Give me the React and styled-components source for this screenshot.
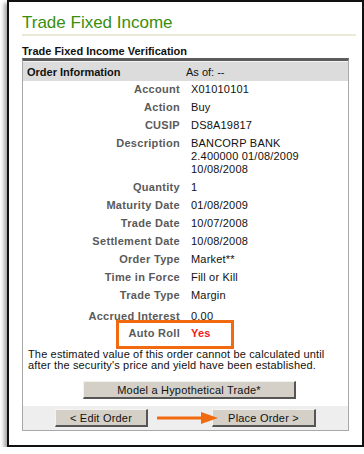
import React from "react";
import styled, { createGlobalStyle } from "styled-components";

const GlobalStyle = createGlobalStyle`
  html, body {
    margin: 0;
    padding: 0;
    background: #ffffff;
  }
  body {
    font-family: "Liberation Sans", Arial, sans-serif;
    font-size: 11px;
    color: #111;
  }
`;

const fields = [
  { label: "Account", value: ["X01010101"] },
  { label: "Action", value: ["Buy"] },
  { label: "CUSIP", value: ["DS8A19817"] },
  {
    label: "Description",
    value: ["BANCORP BANK", "2.400000 01/08/2009", "10/08/2008"],
  },
  { label: "Quantity", value: ["1"] },
  { label: "Maturity Date", value: ["01/08/2009"] },
  { label: "Trade Date", value: ["10/07/2008"] },
  { label: "Settlement Date", value: ["10/08/2008"] },
  { label: "Order Type", value: ["Market**"] },
  { label: "Time in Force", value: ["Fill or Kill"] },
  { label: "Trade Type", value: ["Margin"] },
  { label: "Accrued Interest", value: ["0.00"], spaced: true },
];

const ArrowIcon = () => (
  <svg width="62" height="14" viewBox="0 0 62 14">
    <line x1="1" y1="7" x2="48" y2="7" stroke="#f26a10" strokeWidth="3" strokeLinecap="round" />
    <path d="M44 1 L61 7 L44 13 Z" fill="#f26a10" />
  </svg>
);

export default function App() {
  return (
    <>
      <GlobalStyle />
      <Frame>
        <Title>Trade Fixed Income</Title>
        <Subtitle>Trade Fixed Income Verification</Subtitle>
        <Panel>
          <HeaderRow>
            <span className="heading">Order Information</span>
            <span>As of: --</span>
          </HeaderRow>
          <Fields>
            {fields.map((f) => (
              <FieldRow key={f.label} $spaced={f.spaced}>
                <Label>{f.label}</Label>
                <Value>
                  {f.value.map((line) => (
                    <div key={line}>{line}</div>
                  ))}
                </Value>
              </FieldRow>
            ))}
            <FieldRow>
              <Highlight />
              <Label>Auto Roll</Label>
              <Value $alert>Yes</Value>
            </FieldRow>
          </Fields>
          <Note>
            The estimated value of this order cannot be calculated until
            <br />
            after the security's price and yield have been established.
          </Note>
          <ModelRow>
            <Button $width={213}>Model a Hypothetical Trade*</Button>
          </ModelRow>
          <ActionBar>
            <Button $width={93}>&lt; Edit Order</Button>
            <Pointer>
              <ArrowIcon />
            </Pointer>
            <Button $width={104}>Place Order &gt;</Button>
          </ActionBar>
        </Panel>
      </Frame>
    </>
  );
}

const Frame = styled.div`
  box-sizing: border-box;
  margin-left: 7px;
  width: 357px;
  height: 447px;
  border: 2px solid #111;
  box-shadow: -3px 3px 4px rgba(0, 0, 0, 0.35);
  padding: 11px 6px 0 13px;
`;

const Title = styled.h1`
  margin: 0;
  font-family: "Liberation Sans", Arial, sans-serif;
  font-weight: normal;
  font-size: 17px;
  line-height: 19px;
  color: #3a8e0e;
  padding-bottom: 2px;
  border-bottom: 2px solid #ecead6;
`;

const Subtitle = styled.h2`
  margin: 9px 0 0;
  font-size: 11px;
  line-height: 13px;
  font-weight: bold;
  color: #111;
`;

const Panel = styled.div`
  box-sizing: border-box;
  width: 327px;
  border: 1px solid #a8a8a8;
  border-top: 3px solid #5c5c5c;
`;

const HeaderRow = styled.div`
  display: grid;
  grid-template-columns: 163px 1fr;
  align-items: center;
  height: 19px;
  background: #dcdcdc;
  border-top: 1px solid #f4f4f4;

  .heading {
    padding-left: 4px;
    font-weight: bold;
  }
`;

const Fields = styled.div`
  display: flex;
  flex-direction: column;
`;

const FieldRow = styled.div`
  position: relative;
  display: grid;
  grid-template-columns: 157px 1fr;
  column-gap: 11px;
  padding: ${(p) => (p.$spaced ? "5px 0 2px" : "2px 0 3px")};
  line-height: 13px;
`;

const Label = styled.div`
  text-align: right;
  font-weight: bold;
  color: #5a5a5a;
  letter-spacing: 0.3px;
`;

const Value = styled.div`
  color: ${(p) => (p.$alert ? "#f02020" : "#111")};
  font-weight: ${(p) => (p.$alert ? "bold" : "normal")};
  letter-spacing: 0.2px;
`;

const Highlight = styled.span`
  position: absolute;
  left: 93px;
  top: -5px;
  width: 118px;
  height: 29px;
  box-sizing: border-box;
  border: 3px solid #f26a10;
`;

const Note = styled.p`
  margin: 6px 0 0;
  padding-left: 5px;
  line-height: 11px;
  letter-spacing: 0.15px;
`;

const ModelRow = styled.div`
  display: flex;
  justify-content: center;
  padding: 10px 0 7px 8px;
`;

const Button = styled.button`
  box-sizing: border-box;
  width: ${(p) => p.$width}px;
  height: 18px;
  padding: 0;
  font-family: "Liberation Sans", Arial, sans-serif;
  font-size: 11px;
  color: #111;
  letter-spacing: 0.2px;
  background: #d4d0c8;
  border: 1px solid #f4f3ef;
  border-right: 2px solid #555;
  border-bottom: 2px solid #555;
  cursor: pointer;
`;

const ActionBar = styled.div`
  display: flex;
  justify-content: center;
  align-items: center;
  gap: 64px;
  height: 24px;
  background: #eeeeee;
  position: relative;
`;

const Pointer = styled.span`
  position: absolute;
  left: 134px;
  top: 5px;
  line-height: 0;
`;
